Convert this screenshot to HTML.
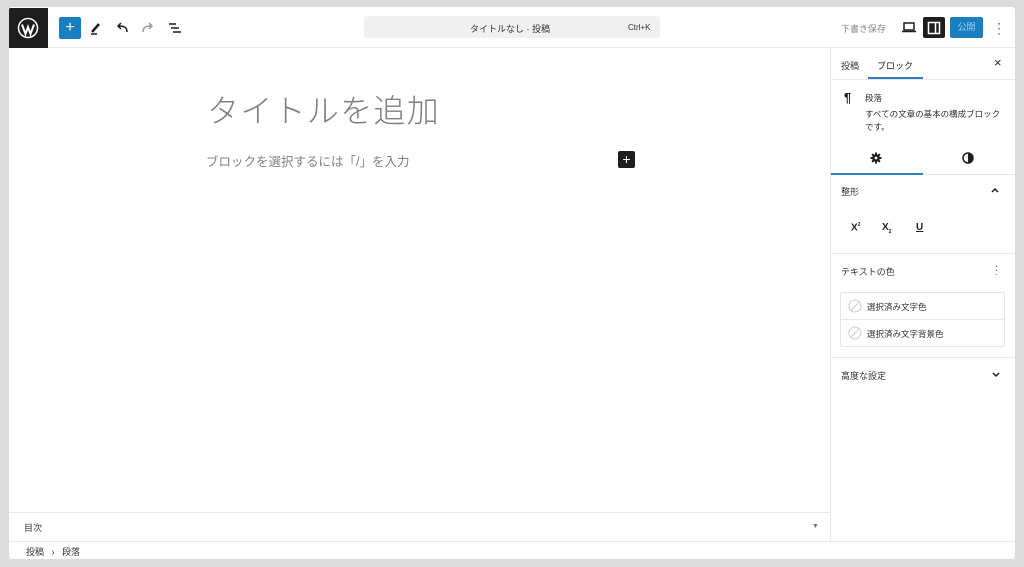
<!DOCTYPE html>
<html><head><meta charset="utf-8"><style>
*{box-sizing:border-box;margin:0;padding:0}
body{width:1024px;height:567px;background:#dcdcdc;font-family:"Liberation Sans","Noto Sans CJK JP",sans-serif;color:#1e1e1e;position:relative;overflow:hidden}
.win{position:absolute;left:9px;top:7px;width:1006px;height:552px;background:#fff;border-radius:3px;overflow:hidden}
.abs{position:absolute}
.hdr{left:0;top:0;width:1006px;height:41px;border-bottom:1px solid #e6e6e6}
.t{font-size:9px;position:absolute;white-space:nowrap}
</style></head><body>
<div class="win">
 <div class="abs hdr"></div>
 <div class="abs" style="left:0;top:1px;width:39px;height:40px;background:#1e1e1e"></div>
 <svg class="abs" style="left:8px;top:10px" width="22" height="22" viewBox="0 0 22 22"><circle cx="11" cy="11" r="9.5" fill="none" stroke="#fff" stroke-width="1.5"/><path d="M5 7.5 L8.5 17 L11 10 L13.5 17 L17 7.5" fill="none" stroke="#fff" stroke-width="2"/></svg>
 <div class="abs" style="left:50px;top:10px;width:22px;height:22px;background:#1a7fc1;border-radius:2px;color:#fff;font-size:16px;line-height:21px;text-align:center">+</div>
 <svg class="abs" style="left:80px;top:14px" width="14" height="14"><path d="M3 11 L10 3" stroke="#1e1e1e" stroke-width="2.5"/><path d="M2 13 H8" stroke="#1e1e1e" stroke-width="1.5"/></svg>
 <svg class="abs" style="left:106px;top:14px" width="14" height="14"><path d="M12 11 C12 6 9 5 3 5 M6 2 L3 5 L6 8" fill="none" stroke="#1e1e1e" stroke-width="1.5"/></svg>
 <svg class="abs" style="left:132px;top:14px" width="14" height="14"><path d="M2 11 C2 6 5 5 11 5 M8 2 L11 5 L8 8" fill="none" stroke="#999" stroke-width="1.5"/></svg>
 <svg class="abs" style="left:159px;top:14px" width="14" height="14"><path d="M1 3 H8 M3 7 H11 M5 11 H13" stroke="#1e1e1e" stroke-width="1.5"/></svg>
 <div class="abs" style="left:355px;top:9px;width:296px;height:22px;background:#f0f0f0;border-radius:3px"></div>
 <div class="t" style="left:461px;top:15px;color:#333">タイトルなし · 投稿</div>
 <div class="t" style="left:619px;top:16px;color:#333;font-size:8px">Ctrl+K</div>
 <div class="t" style="left:832px;top:15px;color:#888">下書き保存</div>
 <svg class="abs" style="left:893px;top:14px" width="14" height="12"><rect x="2" y="2" width="10" height="7" fill="none" stroke="#1e1e1e" stroke-width="1.5"/><path d="M0 10.5 H14" stroke="#1e1e1e" stroke-width="1.5"/></svg>
 <div class="abs" style="left:914px;top:10px;width:22px;height:21px;background:#1e1e1e;border-radius:2px"></div>
 <svg class="abs" style="left:918px;top:14px" width="14" height="14"><rect x="1.5" y="1.5" width="11" height="11" fill="none" stroke="#fff" stroke-width="1.5"/><path d="M8.5 1.5 V12.5" stroke="#fff" stroke-width="1.5"/></svg>
 <div class="abs" style="left:941px;top:10px;width:33px;height:21px;background:#1a7fc1;border-radius:2px;color:#a9cce8;font-size:9px;line-height:21px;text-align:center">公開</div>
 <div class="abs" style="left:988px;top:14px;font-size:12px;line-height:5px;width:4px;color:#1e1e1e">·<br>·<br>·</div>

 <div class="abs" style="left:198px;top:79px;font-size:32px;color:#808080;font-weight:300;letter-spacing:1.3px">タイトルを追加</div>
 <div class="abs" style="left:197px;top:144px;font-size:12.5px;color:#808080">ブロックを選択するには「/」を入力</div>
 <div class="abs" style="left:609px;top:144px;width:17px;height:17px;background:#1e1e1e;border-radius:2px;color:#fff;font-size:14px;line-height:16px;text-align:center">+</div>

 <div class="abs" style="left:0;top:505px;width:821px;border-top:1px solid #e6e6e6"></div>
 <div class="t" style="left:15px;top:514px;color:#333">目次</div>
 <div class="abs" style="left:803px;top:516px;font-size:7px;color:#777">▼</div>
 <div class="abs" style="left:0;top:534px;width:1006px;border-top:1px solid #e6e6e6"></div>
 <div class="t" style="left:17px;top:538px;color:#333">投稿 &nbsp;&nbsp;›&nbsp;&nbsp; 段落</div>

 <div class="abs" style="left:821px;top:41px;width:1px;height:493px;background:#e6e6e6"></div>
 <div class="abs" style="left:822px;top:72px;width:184px;border-top:1px solid #e6e6e6"></div>
 <div class="t" style="left:832px;top:52px;color:#333">投稿</div>
 <div class="t" style="left:868px;top:52px;color:#1e1e1e">ブロック</div>
 <div class="abs" style="left:859px;top:70px;width:55px;height:2px;background:#2f7fc3"></div>
 <div class="abs" style="left:985px;top:48px;font-size:13px">×</div>
 <div class="abs" style="left:835px;top:83px;font-size:13px;font-weight:bold">¶</div>
 <div class="t" style="left:856px;top:85px;color:#333;font-size:8.5px">段落</div>
 <div class="t" style="left:856px;top:101px;color:#333;font-size:8.5px;line-height:13px;width:142px;white-space:normal">すべての文章の基本の構成ブロックです。</div>
 <svg class="abs" style="left:861px;top:145px" width="12" height="12" viewBox="0 0 12 12"><g fill="#1e1e1e"><rect x="5" y="0.5" width="2" height="11"/><rect x="0.5" y="5" width="11" height="2"/><rect x="5" y="0.5" width="2" height="11" transform="rotate(45 6 6)"/><rect x="5" y="0.5" width="2" height="11" transform="rotate(-45 6 6)"/><circle cx="6" cy="6" r="3.8"/></g><circle cx="6" cy="6" r="1.4" fill="#fff"/></svg>
 <svg class="abs" style="left:953px;top:145px" width="12" height="12"><circle cx="6" cy="6" r="5" fill="none" stroke="#1e1e1e" stroke-width="1.5"/><path d="M6 1 A5 5 0 0 1 6 11 Z" fill="#1e1e1e"/></svg>
 <div class="abs" style="left:822px;top:166px;width:92px;height:2px;background:#2f7fc3"></div>
 <div class="abs" style="left:914px;top:167px;width:92px;border-top:1px solid #e6e6e6"></div>
 <div class="t" style="left:832px;top:178px;color:#333">整形</div>
 <svg class="abs" style="left:981px;top:179px" width="10" height="8"><path d="M2 6 L5 3 L8 6" fill="none" stroke="#1e1e1e" stroke-width="1.5"/></svg>
 <div class="t" style="left:842px;top:215px;font-size:10px;font-weight:bold">X<sup style="font-size:5px">2</sup></div>
 <div class="t" style="left:873px;top:215px;font-size:10px;font-weight:bold">X<sub style="font-size:5px">2</sub></div>
 <div class="t" style="left:907px;top:215px;font-size:10px;font-weight:bold;text-decoration:underline">U</div>
 <div class="abs" style="left:822px;top:246px;width:184px;border-top:1px solid #e6e6e6"></div>
 <div class="t" style="left:832px;top:258px;color:#333">テキストの色</div>
 <div class="abs" style="left:986px;top:258px;font-size:10px;line-height:4px;color:#555">·<br>·<br>·</div>
 <div class="abs" style="left:831px;top:285px;width:165px;height:55px;border:1px solid #e6e6e6;border-radius:2px"></div>
 <div class="abs" style="left:832px;top:312px;width:163px;border-top:1px solid #e6e6e6"></div>
 <svg class="abs" style="left:839px;top:292px" width="14" height="14"><circle cx="7" cy="7" r="6" fill="none" stroke="#ccc"/><path d="M3 11 L11 3" stroke="#ccc"/></svg>
 <svg class="abs" style="left:839px;top:319px" width="14" height="14"><circle cx="7" cy="7" r="6" fill="none" stroke="#ccc"/><path d="M3 11 L11 3" stroke="#ccc"/></svg>
 <div class="t" style="left:858px;top:294px;color:#333;font-size:8.5px">選択済み文字色</div>
 <div class="t" style="left:858px;top:321px;color:#333;font-size:8.5px">選択済み文字背景色</div>
 <div class="abs" style="left:822px;top:350px;width:184px;border-top:1px solid #e6e6e6"></div>
 <div class="t" style="left:832px;top:362px;color:#333">高度な設定</div>
 <svg class="abs" style="left:982px;top:364px" width="10" height="8"><path d="M2 2 L5 5 L8 2" fill="none" stroke="#1e1e1e" stroke-width="1.5"/></svg>
</div>
</body></html>
